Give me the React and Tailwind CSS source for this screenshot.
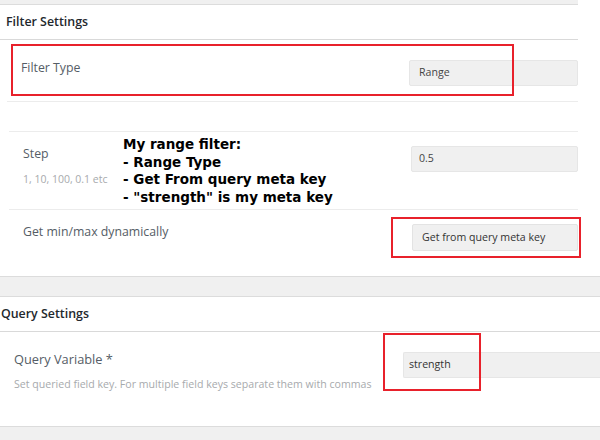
import React from "react";

const font = { fontFamily: '"Open Sans", "Noto Sans", sans-serif' };

export default function App() {
  return (
    <div
      className="relative w-[600px] h-[440px] overflow-hidden bg-white"
      style={font}
    >
      {/* top strip */}
      <div className="w-[578px] h-[5px] bg-[#f0f0f0] border-b border-[#dcdcdc]" />

      {/* Filter settings panel */}
      <div className="w-[578px]">
        <div className="h-[35px] flex items-center px-[6px] border-b border-[#d9d9d9]">
          <span className="text-[12.4px] font-semibold text-[#23282d]">Filter Settings</span>
        </div>

        {/* Filter type */}
        <div className="ml-[7px] flex items-start justify-between pt-[19px] pb-[15px] border-b border-[#ececec]">
          <span className="ml-[14px] text-[12.3px] leading-[18px] text-[#555d66]">Filter Type</span>
          <div className="w-[169px] h-[26px] mt-[1px] flex items-center px-[9px] bg-[#f0f0f0] border border-[#e6e6e6] rounded-[2px] text-[10.6px] text-[#444]">
            Range
          </div>
        </div>

        {/* hidden row */}
        <div className="ml-[9px] h-[30px] border-b border-[#ececec]" />

        {/* Step */}
        <div className="ml-[9px] flex items-start justify-between pt-[13px] pb-[22px] border-b border-[#ececec]">
          <div className="ml-[14px] flex flex-col">
            <span className="text-[12.3px] leading-[18px] text-[#555d66]">Step</span>
            <span className="mt-[8px] text-[10.5px] leading-[16px] text-[#a7aaad]">1, 10, 100, 0.1 etc</span>
          </div>
          <div className="w-[167px] h-[26px] mt-[1px] flex items-center px-[7px] bg-[#f0f0f0] border border-[#e6e6e6] rounded-[2px] text-[10.6px] text-[#444]">
            0.5
          </div>
        </div>

        {/* min/max */}
        <div className="ml-[9px] flex items-start justify-between pt-[13px] pb-[25px]">
          <span className="ml-[14px] text-[12.3px] leading-[18px] text-[#555d66]">Get min/max dynamically</span>
          <div className="w-[166px] h-[27px] mt-[1px] flex items-center px-[9px] bg-[#f0f0f0] border border-[#e3e3e3] rounded-[2px] text-[10.6px] text-[#333]">
            Get from query meta key
          </div>
        </div>
      </div>

      {/* gray band */}
      <div className="w-full h-[21px] bg-[#f0f0f0] border-t border-b border-[#dcdcdc]" />

      {/* Query settings panel */}
      <div className="w-full">
        <div className="h-[35px] flex items-center px-[1px] border-b border-[#d9d9d9]">
          <span className="text-[12.4px] font-semibold text-[#23282d]">Query Settings</span>
        </div>
        <div className="flex items-start justify-between pt-[18px] pb-[34px] border-b border-[#dcdcdc]">
          <div className="ml-[14px] flex flex-col">
            <span className="text-[12.8px] leading-[18px] text-[#555d66]">Query Variable *</span>
            <span className="mt-[8px] text-[10.6px] leading-[16px] text-[#a7aaad]">
              Set queried field key. For multiple field keys separate them with commas
            </span>
          </div>
          <div className="w-[197px] h-[26px] mt-[2px] flex items-center px-[5px] bg-[#f0f0f0] border border-[#e6e6e6] border-r-0 rounded-l-[2px] text-[10.6px] text-[#333]">
            strength
          </div>
        </div>
        <div className="w-full h-[20px] bg-[#f0f0f0]" />
      </div>

      {/* annotation */}
      <div
        className="absolute left-[123px] top-[136px] text-[13.5px] leading-[17.5px] font-bold text-black"
        style={{ fontFamily: '"DejaVu Sans", Verdana, sans-serif' }}
      >
        <div>My range filter:</div>
        <div>- Range Type</div>
        <div>- Get From query meta key</div>
        <div>- "strength" is my meta key</div>
      </div>

      {/* red highlight boxes */}
      <div className="absolute left-[11px] top-[44px] w-[503px] h-[52px] border-2 border-[#e8212b]" />
      <div className="absolute left-[391px] top-[217px] w-[190px] h-[41px] border-2 border-[#e8212b]" />
      <div className="absolute left-[383px] top-[333px] w-[98px] h-[58px] border-2 border-[#e8212b]" />
    </div>
  );
}
